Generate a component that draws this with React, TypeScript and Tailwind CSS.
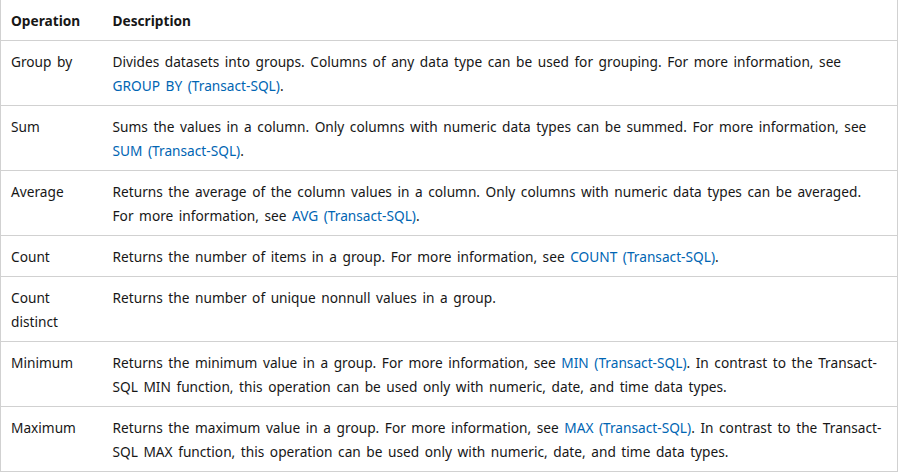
import React from "react"

type Row = {
  op: string
  before: string
  link?: string
  after?: string
}

const rows: Row[] = [
  {
    op: "Group by",
    before:
      "Divides datasets into groups. Columns of any data type can be used for grouping. For more information, see ",
    link: "GROUP BY (Transact-SQL)",
    after: ".",
  },
  {
    op: "Sum",
    before:
      "Sums the values in a column. Only columns with numeric data types can be summed. For more information, see ",
    link: "SUM (Transact-SQL)",
    after: ".",
  },
  {
    op: "Average",
    before:
      "Returns the average of the column values in a column. Only columns with numeric data types can be averaged. For more information, see ",
    link: "AVG (Transact-SQL)",
    after: ".",
  },
  {
    op: "Count",
    before: "Returns the number of items in a group. For more information, see ",
    link: "COUNT (Transact-SQL)",
    after: ".",
  },
  {
    op: "Count distinct",
    before: "Returns the number of unique nonnull values in a group.",
  },
  {
    op: "Minimum",
    before: "Returns the minimum value in a group. For more information, see ",
    link: "MIN (Transact-SQL)",
    after:
      ". In contrast to the Transact-SQL MIN function, this operation can be used only with numeric, date, and time data types.",
  },
  {
    op: "Maximum",
    before: "Returns the maximum value in a group. For more information, see ",
    link: "MAX (Transact-SQL)",
    after:
      ". In contrast to the Transact-SQL MAX function, this operation can be used only with numeric, date, and time data types.",
  },
]

export default function App() {
  return (
    <div className="bg-white min-h-[476px] w-[901px] font-['Segoe_UI','Noto_Sans',sans-serif] text-[13.7px] leading-6 [word-spacing:2px] text-[#171717]">
      <table className="w-[898px] border-collapse border-x border-b border-[#d1d1d1]">
        <thead>
          <tr className="border-b border-[#d1d1d1]">
            <th className="w-[102px] pt-[9px] pb-[7px] pl-[10px] pr-[13px] text-left font-bold">Operation</th>
            <th className="pt-[9px] pb-[7px] pl-[10px] pr-[13px] text-left font-bold">Description</th>
          </tr>
        </thead>
        <tbody>
          {rows.map((r) => (
            <tr key={r.op} className="border-b border-[#d1d1d1] align-top">
              <td className="pt-[9px] pb-[7px] pl-[10px] pr-[13px]">{r.op}</td>
              <td className="pt-[9px] pb-[7px] pl-[10px] pr-[13px]">
                {r.before}
                {r.link && <a className="text-[#0065b3]">{r.link}</a>}
                {r.after}
              </td>
            </tr>
          ))}
        </tbody>
      </table>
    </div>
  )
}
